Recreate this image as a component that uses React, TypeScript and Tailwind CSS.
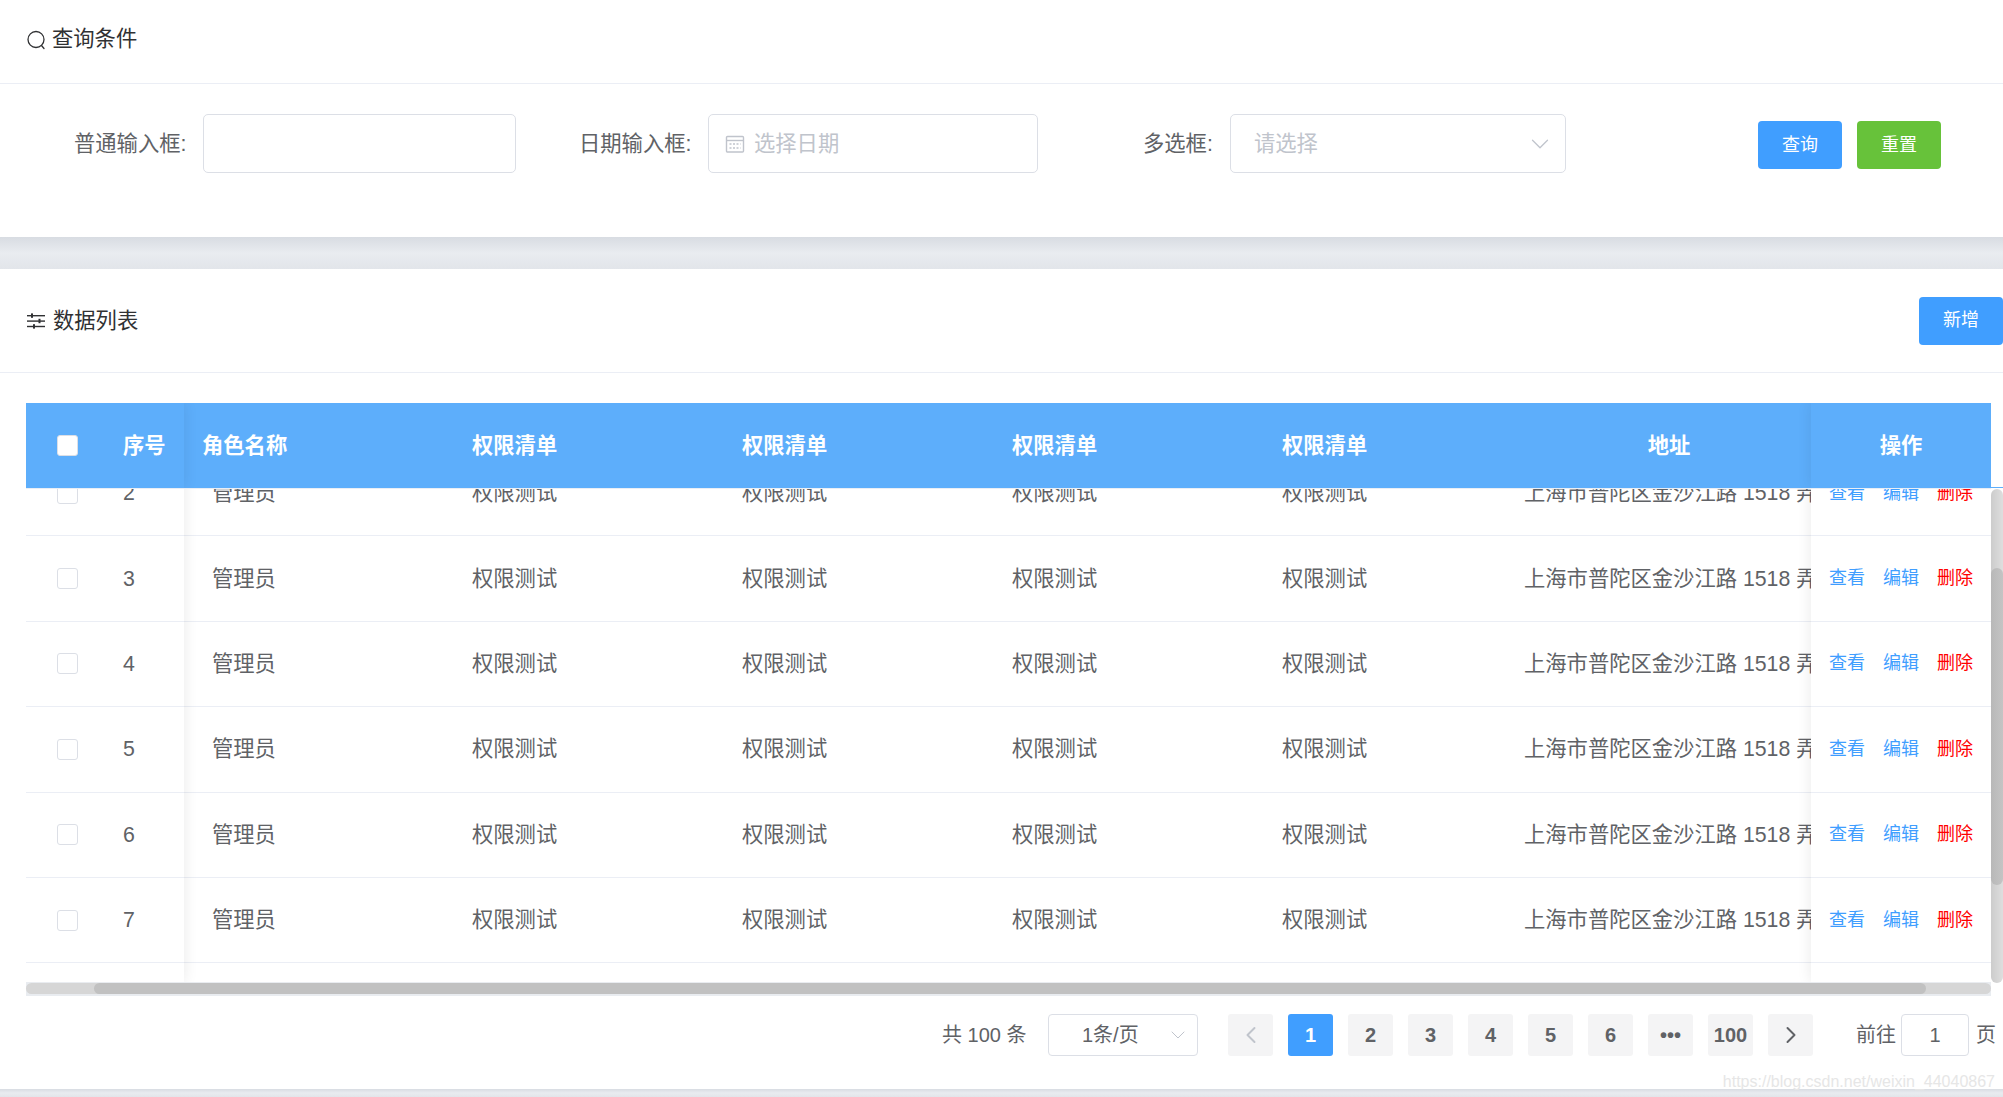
import { ChevronDown, ChevronLeft, ChevronRight } from "lucide-react"

const rows = [2, 3, 4, 5, 6, 7, 8]
const pages = ["1", "2", "3", "4", "5", "6", "•••", "100"]
const rowClass = "h-[85.4px] shrink-0 flex items-center border-b border-[#ebeef5] bg-white"
const fixedShadow = "shadow-[0_0_14px_rgba(0,0,0,0.09)]"

function SearchIcon() {
  return (
    <svg width="20" height="20" viewBox="0 0 20 20" fill="none" stroke="#303133" strokeWidth="1.3">
      <circle cx="10" cy="9.5" r="8" />
      <path d="M15.5 15.5l2.5 3" strokeLinecap="round" />
    </svg>
  )
}

function SlidersIcon() {
  return (
    <svg width="19" height="16" viewBox="0 0 19 16" fill="#303133">
      <rect x="0" y="2" width="18" height="1.4" />
      <rect x="0" y="7.4" width="18" height="1.4" />
      <rect x="0" y="12.8" width="18" height="1.4" />
      <rect x="4" y="0.4" width="2" height="4.4" />
      <rect x="11.5" y="5.8" width="2" height="4.4" />
      <rect x="6" y="11.2" width="2" height="4.4" />
    </svg>
  )
}

function CalendarIcon() {
  return (
    <svg width="20" height="20" viewBox="0 0 20 20" fill="none" stroke="#c0c4cc" strokeWidth="1.4">
      <rect x="1.5" y="2.5" width="17" height="15.5" rx="1" />
      <path d="M1.5 6.5h17" />
      <path d="M4.5 10h11M4.5 14h11" strokeDasharray="2 1.5" />
    </svg>
  )
}

function Checkbox() {
  return <span className="block w-[21px] h-[21px] rounded-[3px] border border-[#dcdfe6] bg-white" />
}

function Band({ className }: { className: string }) {
  return <div className={`bg-[linear-gradient(#d8dce2,#e9ecf0_50%,#e2e5ea)] ${className}`} />
}

function FormLabel({ text, className }: { text: string; className: string }) {
  return <label className={`h-[59px] pt-[2px] flex items-center text-[21.3px] text-[#606266] whitespace-nowrap ${className}`}>{text}</label>
}

export default function App() {
  return (
    <div className="relative w-full h-screen overflow-hidden bg-white font-['Liberation_Sans','Noto_Sans_CJK_SC',sans-serif]">
      <section className="h-[237px]">
        <div className="h-[84px] flex items-center gap-[6px] pl-[26px] pb-[4px] border-b border-[#ebeef5] text-[21.3px] text-[#303133]">
          <SearchIcon />
          <span>查询条件</span>
        </div>
        <div className="flex items-start pt-[30px] pl-[74px]">
          <FormLabel text="普通输入框:" className="w-[110px] mr-[19px]" />
          <input className="w-[313px] h-[59px] rounded-[5px] border border-[#dcdfe6] outline-none" />
          <FormLabel text="日期输入框:" className="w-[109px] ml-[63px] mr-[20px]" />
          <div className="w-[330px] h-[59px] flex items-center gap-[9px] pl-[16px] rounded-[5px] border border-[#dcdfe6] text-[21.3px] text-[#c0c4cc]">
            <CalendarIcon />
            <span className="mt-[2px]">选择日期</span>
          </div>
          <FormLabel text="多选框:" className="w-[69px] ml-[105px] mr-[18px]" />
          <div className="w-[336px] h-[59px] flex items-center justify-between pl-[23px] pr-[10px] rounded-[5px] border border-[#dcdfe6] text-[21.3px] text-[#c0c4cc]">
            <span className="mt-[2px]">请选择</span>
            <ChevronDown size={30} strokeWidth={1} />
          </div>
          <button className="w-[84px] h-[48px] mt-[7px] ml-[192px] rounded-[4px] bg-[#409eff] text-[18px] text-white">查询</button>
          <button className="w-[84px] h-[48px] mt-[7px] ml-[15px] rounded-[4px] bg-[#67c23a] text-[18px] text-white">重置</button>
        </div>
      </section>

      <Band className="h-[32px]" />

      <section>
        <div className="h-[104px] flex items-center justify-between pl-[27px] border-b border-[#ebeef5]">
          <div className="flex items-center gap-[7px] text-[21.3px] text-[#303133]">
            <SlidersIcon />
            <span className="mt-[2px]">数据列表</span>
          </div>
          <button className="w-[84px] h-[48px] rounded-[4px] bg-[#409eff] text-[18px] text-white">新增</button>
        </div>

        <div className="flex pl-[26px] pt-[30px]">
          <div className="w-[1965px] shrink-0">
            {/* header */}
            <div className="relative z-20 h-[86px] flex overflow-hidden bg-[#5daefb] text-[21.3px] font-bold text-white border-b border-[#e9eef5]">
              <div className={`w-[158px] shrink-0 flex items-center pl-[31px] bg-[#5daefb] z-10 ${fixedShadow}`}>
                <Checkbox />
                <span className="ml-[45px] mt-[2px]">序号</span>
              </div>
              <div className="flex-1 flex items-center overflow-hidden pt-[2px]">
                <div className="w-[288px] shrink-0 pl-[18px]">角色名称</div>
                <div className="w-[270px] shrink-0">权限清单</div>
                <div className="w-[270px] shrink-0">权限清单</div>
                <div className="w-[270px] shrink-0">权限清单</div>
                <div className="w-[242px] shrink-0">权限清单</div>
                <div className="w-[290px] shrink-0 text-center">地址</div>
              </div>
              <div className={`w-[180px] shrink-0 flex items-center justify-center pt-[2px] bg-[#5daefb] z-10 ${fixedShadow}`}>操作</div>
            </div>

            {/* body */}
            <div className="h-[493px] flex overflow-hidden text-[21.3px] text-[#606266]">
              <div className={`relative z-10 w-[158px] shrink-0 -mt-[38px] flex flex-col bg-white ${fixedShadow}`}>
                {rows.map((n) => (
                  <div key={n} className={`${rowClass} pl-[31px]`}>
                    <Checkbox />
                    <span className="ml-[45px] mt-[2px]">{n}</span>
                  </div>
                ))}
              </div>
              <div className="flex-1 min-w-0 -mt-[38px] flex flex-col overflow-hidden">
                {rows.map((n) => (
                  <div key={n} className={`${rowClass} pt-[2px] whitespace-nowrap`}>
                    <div className="w-[288px] shrink-0 pl-[28px]">管理员</div>
                    <div className="w-[270px] shrink-0">权限测试</div>
                    <div className="w-[270px] shrink-0">权限测试</div>
                    <div className="w-[270px] shrink-0">权限测试</div>
                    <div className="w-[242px] shrink-0">权限测试</div>
                    <div className="w-[290px] shrink-0">上海市普陀区金沙江路 1518 弄</div>
                  </div>
                ))}
              </div>
              <div className={`relative z-10 w-[180px] shrink-0 -mt-[38px] flex flex-col bg-white ${fixedShadow}`}>
                {rows.map((n) => (
                  <div key={n} className={`${rowClass} gap-[18px] pl-[18px] text-[18px]`}>
                    <a className="text-[#409eff]">查看</a>
                    <a className="text-[#409eff]">编辑</a>
                    <a className="text-[#ff0000]">删除</a>
                  </div>
                ))}
              </div>
            </div>

            {/* horizontal scrollbar */}
            <div className="h-[14px] pt-[1px] pb-[2px] bg-[#e9ecf0]">
              <div className="h-[11px] rounded-full bg-[#d6d6d6]">
                <div className="h-[11px] w-[1832px] ml-[68px] rounded-full bg-[#c1c1c1]" />
              </div>
            </div>
          </div>

          {/* vertical scrollbar */}
          <div className="w-[12px] shrink-0 pt-[84px]">
            <div className="h-[1px] mb-[1px] bg-[#5daefb]" />
            <div className="h-[494px] rounded-full bg-[linear-gradient(to_right,#cccccc,#dedede)] pt-[79px]">
              <div className="h-[317px] rounded-full bg-[linear-gradient(to_right,#b8b8b8,#c4c4c4)]" />
            </div>
          </div>
        </div>

        {/* pagination */}
        <div className="h-[93px] pt-[18px] pl-[942px] flex items-start text-[20px] text-[#606266]">
          <span className="w-[106px] h-[42px] flex items-center whitespace-pre">共 100 条</span>
          <div className="w-[150px] h-[42px] flex items-center justify-between pl-[33px] pr-[7px] rounded-[4px] border border-[#dcdfe6]">
            <span>1条/页</span>
            <ChevronDown size={24} strokeWidth={1} className="text-[#c0c4cc]" />
          </div>
          <div className="ml-[30px] flex gap-[15px] text-[20px] font-bold">
            <span className="w-[45px] h-[42px] rounded-[3px] bg-[#f4f4f5] text-[#c0c4cc] flex items-center justify-center">
              <ChevronLeft size={28} strokeWidth={1.7} />
            </span>
            {pages.map((p, i) => (
              <span
                key={p}
                className={`w-[45px] h-[42px] rounded-[3px] flex items-center justify-center ${i === 0 ? "bg-[#409eff] text-white" : "bg-[#f4f4f5] text-[#606266]"}`}
              >
                {p}
              </span>
            ))}
            <span className="w-[45px] h-[42px] rounded-[3px] bg-[#f4f4f5] text-[#606266] flex items-center justify-center">
              <ChevronRight size={28} strokeWidth={1.7} />
            </span>
          </div>
          <span className="ml-[43px] h-[42px] flex items-center">前往</span>
          <div className="ml-[5px] w-[68px] h-[42px] flex items-center justify-center rounded-[4px] border border-[#dcdfe6]">1</div>
          <span className="ml-[7px] h-[42px] flex items-center">页</span>
        </div>
      </section>

      <Band className="absolute left-0 right-0 bottom-0 h-[8px]" />
      <span className="absolute right-[8px] bottom-[3px] text-[16px] text-[#e6e6e6]">https://blog.csdn.net/weixin_44040867</span>
    </div>
  )
}
